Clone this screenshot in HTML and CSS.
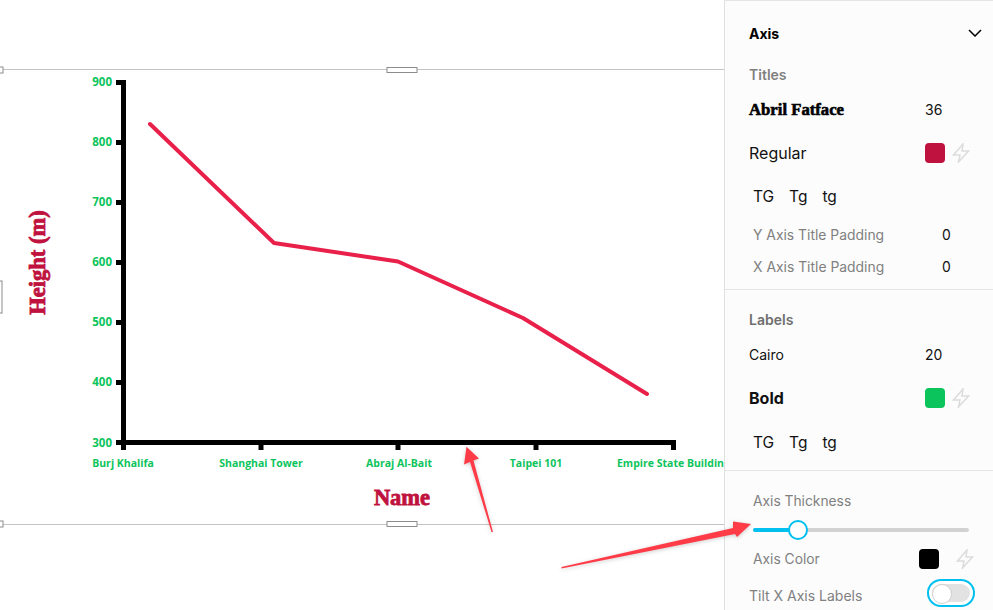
FILE: index.html
```html
<!DOCTYPE html>
<html lang="en">
<head>
    <meta charset="UTF-8">
    <title>Chart Editor</title>
    <link rel="stylesheet" href="styles.css">
</head>
<body>
    <div class="page">
        <main class="canvas">
            <svg class="chart" width="724" height="610" viewBox="0 0 724 610">
                <!-- selection frame -->
                <line class="frame" x1="0" y1="69.5" x2="724" y2="69.5"/>
                <line class="frame" x1="0" y1="524.5" x2="724" y2="524.5"/>
                <rect class="handle" x="-3" y="67" width="6" height="6"/>
                <rect class="handle" x="-3" y="521" width="6" height="6"/>
                <rect class="handle" x="387" y="67.5" width="30" height="5"/>
                <rect class="handle" x="387" y="521.5" width="30" height="5"/>
                <rect class="handle" x="-3" y="281" width="5" height="32"/>

                <!-- axes -->
                <path class="axis" d="M116 82.500H123.500V442.500M116 142.500H123.500M116 202.500H123.500M116 262.500H123.500M116 322.500H123.500M116 382.500H123.500M116 442.500H676M123.500 442.500V450M261 442.500V450M398 442.500V450M536 442.500V450M673.500 442.500V450"/>

                <g class="y-labels">
                    <text x="112" y="86">900</text>
                    <text x="112" y="146">800</text>
                    <text x="112" y="206">700</text>
                    <text x="112" y="266">600</text>
                    <text x="112" y="326">500</text>
                    <text x="112" y="386">400</text>
                    <text x="112" y="447">300</text>
                </g>
                <g class="x-labels">
                    <text x="123" y="467">Burj Khalifa</text>
                    <text x="261" y="467">Shanghai Tower</text>
                    <text x="399" y="467">Abraj Al-Bait</text>
                    <text x="536" y="467">Taipei 101</text>
                    <text x="670.500" y="467">Empire State Buildin</text>
                </g>

                <polyline class="series" points="150,124 274,243 398,261.5 523,318 647,394"/>

                <text class="axis-title" x="402" y="505">Name</text>
                <text class="axis-title" transform="translate(45 262.500) rotate(-90)">Height (m)</text>
            </svg>
        </main>

        <aside class="panel">
            <section class="group group-titles">
                <div class="panel-head">
                    <h2>Axis</h2>
                    <svg width="14" height="8" viewBox="0 0 14 8"><path class="chevron" d="M1 1l6 6 6-6"/></svg>
                </div>
                <h3>Titles</h3>
                <div class="row row-font">
                    <span class="font-abril">Abril Fatface</span>
                    <span class="value">36</span>
                </div>
                <div class="row row-weight">
                    <span>Regular</span>
                    <span class="swatch swatch-red"></span>
                    <svg class="bolt" width="18" height="20" viewBox="0 0 18 20"><path d="M11 1L1.500 12H8L6.500 19 16.500 8H10z"/></svg>
                </div>
                <div class="cases">
                    <span>TG</span><span>Tg</span><span>tg</span>
                </div>
                <div class="row row-sub">
                    <span>Y Axis Title Padding</span>
                    <span class="value-sub">0</span>
                </div>
                <div class="row row-sub">
                    <span>X Axis Title Padding</span>
                    <span class="value-sub">0</span>
                </div>
            </section>

            <section class="group group-labels">
                <h3>Labels</h3>
                <div class="row row-font-labels">
                    <span>Cairo</span>
                    <span class="value">20</span>
                </div>
                <div class="row row-weight">
                    <strong>Bold</strong>
                    <span class="swatch swatch-green"></span>
                    <svg class="bolt" width="18" height="20" viewBox="0 0 18 20"><path d="M11 1L1.500 12H8L6.500 19 16.500 8H10z"/></svg>
                </div>
                <div class="cases">
                    <span>TG</span><span>Tg</span><span>tg</span>
                </div>
            </section>

            <section class="group group-axis">
                <div class="field-label">Axis Thickness</div>
                <div class="slider">
                    <div class="slider-fill"></div>
                    <div class="slider-thumb"></div>
                </div>
                <div class="row row-color">
                    <span>Axis Color</span>
                    <span class="swatch swatch-black"></span>
                    <svg class="bolt" width="18" height="20" viewBox="0 0 18 20"><path d="M11 1L1.500 12H8L6.500 19 16.500 8H10z"/></svg>
                </div>
                <div class="row row-tilt">
                    <span class="tilt-label">Tilt X Axis Labels</span>
                    <span class="toggle"><span class="toggle-knob"></span></span>
                </div>
            </section>
        </aside>

        <!-- annotation arrows drawn over the screenshot -->
        <svg class="arrows" width="993" height="610" viewBox="0 0 993 610">
            <path d="M466.500 446.700L479 458.500 473.500 460.500 493 532 491.500 532 470 462 464 464.500z"/>
            <path d="M751 524L737 537 735 534 561.500 568.500 561.500 567 733 528 733 521.500z"/>
        </svg>
    </div>
</body>
</html>
```

FILE: styles.css
```css
* {
    margin: 0;
    padding: 0;
    box-sizing: border-box;
}

body {
    background: #fff;
    font-family: Inter, "Noto Sans", sans-serif;
    overflow: hidden;
}

.page {
    display: flex;
    position: relative;
    width: 993px;
    height: 610px;
    overflow: hidden;
}

.canvas {
    width: 724px;
    flex: none;
}

.chart {
    display: block;
}

.frame {
    stroke: #c4c4c4;
    stroke-width: 1;
}

.handle {
    fill: #fff;
    stroke: #8c8c8c;
    stroke-width: 1;
}

.axis {
    fill: none;
    stroke: #000;
    stroke-width: 5;
}

.y-labels text {
    fill: #0cc45c;
    font-family: "Open Sans", sans-serif;
    font-size: 11.500px;
    font-weight: 700;
    text-anchor: end;
}

.x-labels text {
    fill: #0cc45c;
    font-family: "Open Sans", sans-serif;
    font-size: 10.500px;
    font-weight: 700;
    text-anchor: middle;
}

.series {
    fill: none;
    stroke: #e8204a;
    stroke-width: 4;
    stroke-linecap: round;
    stroke-linejoin: round;
}

.axis-title {
    fill: #c0123e;
    font-family: "Liberation Serif", serif;
    font-size: 22.500px;
    font-weight: 700;
    text-anchor: middle;
    stroke: #c0123e;
    stroke-width: 0.800px;
}

.panel {
    width: 269px;
    flex: none;
    height: 610px;
    background: #fcfcfc;
    border-left: 1px solid #e0e0e0;
    border-top: 1px solid #e4e4e4;
    color: #111;
    font-size: 14px;
}

.group {
    padding: 0 20px 0 24px;
    border-bottom: 1px solid #e4e4e4;
}

.group-titles {
    height: 289px;
    padding-top: 24px;
}

.group-labels {
    height: 181px;
    padding-top: 22px;
}

.group-axis {
    border-bottom: none;
    padding-top: 20px;
}

.panel-head {
    display: flex;
    align-items: center;
    justify-content: space-between;
    height: 16px;
    margin-right: -9px;
}

h2 {
    font-size: 14px;
    font-weight: 700;
    color: #000;
}

.chevron {
    fill: none;
    stroke: #000;
    stroke-width: 1.500;
}

h3 {
    font-size: 14px;
    font-weight: 600;
    color: #808080;
    line-height: 16px;
}

.group-titles h3 {
    margin-top: 26px;
}

.group-labels h3 {
    color: #6f6f6f;
}

.row {
    display: flex;
    align-items: center;
}

.row > :first-child {
    flex: 1;
}

.row-font {
    height: 20px;
    margin-top: 16px;
}

.row-font-labels {
    height: 20px;
    margin-top: 16px;
}

.font-abril {
    padding-top: 2px;
    font-family: "Liberation Serif", serif;
    font-size: 16.700px;
    font-weight: 700;
    color: #000;
    -webkit-text-stroke: 0.600px #000;
}

.value {
    width: 48px;
}

.row-weight {
    height: 20px;
    margin-top: 24px;
    font-size: 16px;
}

.row-weight strong {
    font-weight: 700;
    color: #111;
}

.swatch {
    width: 20px;
    height: 20px;
    border-radius: 4px;
}

.swatch-red {
    background: #c0123e;
}

.swatch-green {
    background: #0cc45c;
}

.swatch-black {
    background: #000;
}

.bolt {
    margin-left: 7px;
    margin-right: 3px;
}

.bolt path {
    fill: none;
    stroke: #dcdcdc;
    stroke-width: 1.500;
}

.cases {
    display: flex;
    gap: 15px;
    margin-top: 24px;
    padding-left: 4px;
    font-size: 15.500px;
    line-height: 20px;
}

.group-labels .cases {
    margin-top: 25px;
}

.row-sub {
    height: 20px;
    padding-left: 4px;
    color: #808080;
    font-size: 13.900px;
}

.cases + .row-sub {
    margin-top: 18px;
}

.row-sub + .row-sub {
    margin-top: 12px;
}

.value-sub {
    width: 31px;
    color: #111;
}

.field-label {
    padding-left: 4px;
    color: #808080;
    font-size: 13.800px;
    line-height: 20px;
}

.slider {
    position: relative;
    height: 4px;
    margin: 17px 4px 0 4px;
    background: #d2d2d2;
    border-radius: 2px;
}

.slider-fill {
    width: 45px;
    height: 4px;
    background: #00c0f0;
    border-radius: 2px;
}

.slider-thumb {
    position: absolute;
    left: 35px;
    top: -8px;
    width: 20px;
    height: 20px;
    background: #fff;
    border: 2px solid #00c0f0;
    border-radius: 50%;
}

.row-color {
    height: 20px;
    margin-top: 17px;
    padding-left: 4px;
    color: #808080;
    font-size: 13.800px;
}

.row-color .bolt {
    margin-left: 17px;
    margin-right: -1px;
}

.row-tilt {
    height: 28px;
    margin-top: 10px;
    color: #808080;
}

.tilt-label {
    padding-top: 5px;
}

.toggle {
    display: block;
    width: 48px;
    height: 28px;
    margin-right: -2px;
    padding: 3px;
    border: 2px solid #00c0f0;
    border-radius: 14px;
    background: #fff;
}

.toggle-knob {
    display: block;
    width: 38px;
    height: 18px;
    border-radius: 9px;
    background: #e2e2e2;
    position: relative;
}

.toggle-knob::after {
    content: "";
    position: absolute;
    left: 0;
    top: 0;
    width: 18px;
    height: 18px;
    border-radius: 50%;
    background: #fff;
    border: 1px solid #d0d0d0;
}

.arrows {
    position: absolute;
    left: 0;
    top: 0;
    pointer-events: none;
    filter: drop-shadow(0 1px 2px rgba(0, 0, 0, 0.2));
}

.arrows path {
    fill: #ff3b47;
}
```
